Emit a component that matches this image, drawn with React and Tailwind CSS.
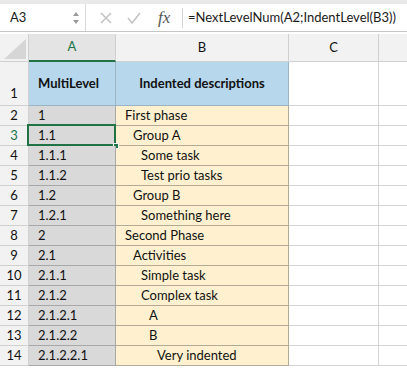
import React from "react";

const rows = [
  ["1", "First phase", 0],
  ["1.1", "Group A", 1],
  ["1.1.1", "Some task", 2],
  ["1.1.2", "Test prio tasks", 2],
  ["1.2", "Group B", 1],
  ["1.2.1", "Something here", 2],
  ["2", "Second Phase", 0],
  ["2.1", "Activities", 1],
  ["2.1.1", "Simple task", 2],
  ["2.1.2", "Complex task", 2],
  ["2.1.2.1", "A", 3],
  ["2.1.2.2", "B", 3],
  ["2.1.2.2.1", "Very indented", 4],
];

const indents = ["pl-[9px]", "pl-[17px]", "pl-[25px]", "pl-[33px]", "pl-[41px]"];

function FormulaBar() {
  return (
    <div className="h-[32px] bg-[#e9e9e9] pt-[4px]">
      <div className="flex h-[28px] items-center bg-white border-b border-[#c6c6c6] text-[13px] text-[#1a1a1a]">
        <div className="flex w-[86px] items-center justify-between pl-[10px] pr-[4px] h-full border-r border-[#d9d9d9]">
          <span>A3</span>
          <svg width="10" height="18" viewBox="0 0 10 18">
            <path d="M2 7 L5 3 L8 7 Z" fill="#9a9a9a" />
            <path d="M2 11 L5 15 L8 11 Z" fill="#9a9a9a" />
          </svg>
        </div>
        <div className="flex items-center h-full">
          <svg className="ml-[13px]" width="14" height="14" viewBox="0 0 14 14">
            <path d="M2 2 L12 12 M12 2 L2 12" stroke="#c4c4c4" strokeWidth="1.6" />
          </svg>
          <svg className="ml-[13px]" width="16" height="14" viewBox="0 0 16 14">
            <path d="M2 7 L6 12 L14 2" stroke="#c4c4c4" strokeWidth="1.6" fill="none" />
          </svg>
          <span
            className="ml-[16px] w-[24px] text-[17px] italic text-[#555]"
            style={{ fontFamily: '"Liberation Serif", serif' }}
          >
            fx
          </span>
          <div className="h-[20px] w-px bg-[#d4d4d4]" />
          <span className="ml-[5px]">=NextLevelNum(A2;IndentLevel(B3))</span>
        </div>
      </div>
    </div>
  );
}

export default function App() {
  return (
    <div
      className="w-[407px] h-[368px] overflow-hidden bg-white"
      style={{ fontFamily: "Lato, 'Noto Sans', sans-serif" }}
    >
      <FormulaBar />
      <div className="h-[2px] bg-white" />
      <div className="grid grid-cols-[29px_87px_173px_90px_28px] grid-rows-[28px_44px_repeat(13,20px)] text-[13px] text-[#111]">
        {/* column headers */}
        <div className="relative bg-[#f2f2f2] border-r border-b border-[#d0d0d0]">
          <svg className="absolute right-[2px] bottom-[2px]" width="22" height="20" viewBox="0 0 22 20">
            <path d="M22 0 L22 20 L0 20 Z" fill="#d6d6d6" />
          </svg>
        </div>
        <div className="flex items-center justify-center bg-[#e4e4e4] border-r border-[#d0d0d0] border-b-2 border-b-[#217346] text-[#217346]">
          A
        </div>
        <div className="flex items-center justify-center bg-[#f2f2f2] border-r border-b border-[#d0d0d0]">B</div>
        <div className="flex items-center justify-center bg-[#f2f2f2] border-r border-b border-[#d0d0d0]">C</div>
        <div className="bg-[#f2f2f2] border-b border-[#d0d0d0]" />

        {/* row 1 */}
        <div className="flex items-end justify-center pb-[2px] bg-[#f2f2f2] border-r border-b border-[#d0d0d0]">1</div>
        <div className="flex items-center pl-[9px] bg-[#b7d7ec] border-r border-b border-[#9bb4c4] font-bold">
          MultiLevel
        </div>
        <div className="flex items-center justify-center bg-[#b7d7ec] border-r border-b border-[#9bb4c4] font-bold">
          Indented descriptions
        </div>
        <div className="border-r border-b border-[#d4d4d4]" />
        <div className="border-b border-[#d4d4d4]" />

        {rows.map(([num, desc, level], i) => {
          const rowNo = i + 2;
          const selected = rowNo === 3;
          return (
            <React.Fragment key={rowNo}>
              <div
                className={`flex items-center justify-center bg-[#f2f2f2] border-r border-b border-[#d0d0d0] ${
                  selected ? "text-[#217346] bg-[#e4e4e4]" : ""
                }`}
              >
                {rowNo}
              </div>
              <div className="relative flex items-center pl-[9px] bg-[#d9d9d9] border-r border-b border-[#a8a8a8]">
                {num}
                {selected && (
                  <>
                    <div className="absolute -left-[2px] -top-[2px] -right-[1px] -bottom-[1px] border-2 border-[#217346]" />
                    <div className="absolute -right-[4px] -bottom-[4px] w-[6px] h-[6px] bg-[#217346] border border-white" />
                  </>
                )}
              </div>
              <div className={`flex items-center bg-[#fff1cf] border-r border-b border-[#b3aa96] ${indents[level]}`}>
                {desc}
              </div>
              <div className="border-r border-b border-[#d4d4d4]" />
              <div className="border-b border-[#d4d4d4]" />
            </React.Fragment>
          );
        })}
      </div>
    </div>
  );
}
